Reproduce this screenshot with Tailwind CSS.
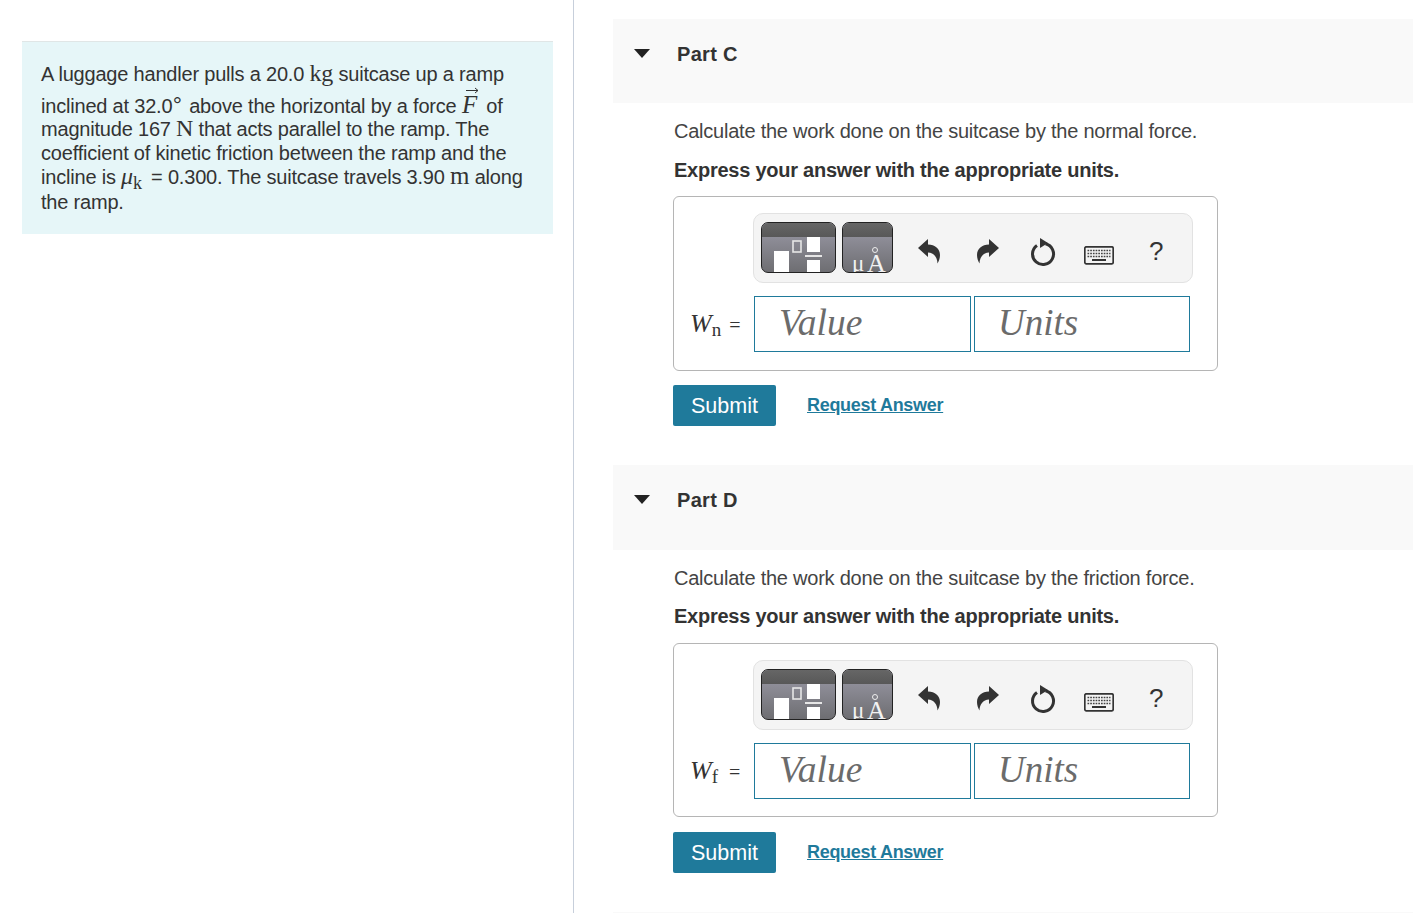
<!DOCTYPE html>
<html lang="en">
<head>
    <meta charset="UTF-8">
    <title>Part C and Part D</title>
    <script src="https://cdn.jsdelivr.net/npm/@tailwindcss/browser@4"></script>
</head>
<body class="bg-white font-['Liberation_Sans',Arial,sans-serif] text-[#333]">
<div class="flex h-[913px] w-[1413px] overflow-hidden">

    <!-- problem statement -->
    <div class="w-[574px] h-full shrink-0 border-r border-[#c7cfdb] pt-[41px] pl-[22px]">
        <div class="w-[531px] h-[193px] bg-[#e6f6f8] border-t border-[#e0e6e6] pl-[19px] pt-[18px] text-[20px] tracking-[-0.2px] text-[#333]">
            <div class="h-[32px] leading-[28px] whitespace-nowrap">A luggage handler pulls a 20.0 <span class="font-['Liberation_Serif',serif] text-[24px] leading-none">kg</span> suitcase up a ramp</div>
            <div class="h-[24px] leading-[24px] whitespace-nowrap">inclined at 32.0<span class="ml-[0.5px] mr-[2px] text-[23px] leading-none">°</span> above the horizontal by a force <span class="relative mr-[4px] font-['Liberation_Serif',serif] italic text-[25px] leading-none">F<svg class="absolute left-[4px] -top-[4px]" width="13" height="7" viewBox="0 0 13 7" fill="none" stroke="#333"><path d="M0 3.500 H12 M9 1 L12 3.500 L9 6"/></svg></span> of</div>
            <div class="h-[25px] leading-[22px] whitespace-nowrap">magnitude 167 <span class="font-['Liberation_Serif',serif] text-[24px] leading-none">N</span> that acts parallel to the ramp. The</div>
            <div class="h-[22px] leading-[24px] whitespace-nowrap">coefficient of kinetic friction between the ramp and the</div>
            <div class="h-[27px] leading-[21px] whitespace-nowrap">incline is <span class="font-['Liberation_Serif',serif] italic text-[24px] leading-none">μ</span><sub class="font-['Liberation_Serif',serif] text-[18px]">k</sub> <span class="ml-[4px]">= 0.300. The suitcase travels 3.90 </span><span class="font-['Liberation_Serif',serif] text-[25px] leading-none">m</span> along</div>
            <div class="h-[24px] leading-[24px] whitespace-nowrap">the ramp.</div>
        </div>
    </div>

    <!-- parts -->
    <div class="flex-1 pt-[19px] pl-[39px]">

        <!-- Part C -->
        <section class="h-[446px]">
            <div class="h-[84px] bg-[#f9f9f9] flex items-start pt-[22px] pl-[21px]">
                <span class="mt-[8px] w-0 h-0 border-l-[8px] border-r-[8px] border-t-[9px] border-l-transparent border-r-transparent border-t-[#222]"></span>
                <h2 class="ml-[27px] text-[20px] leading-[26px] font-bold tracking-[0.3px] text-[#333]">Part C</h2>
            </div>
            <div class="ml-[60px] w-[545px]">
                <p class="mt-[15px] pl-[1px] text-[20px] leading-[26px] tracking-[-0.23px] text-[#444]">Calculate the work done on the suitcase by the normal force.</p>
                <p class="mt-[13px] pl-[1px] text-[20px] leading-[26px] tracking-[-0.25px] font-bold text-[#333]">Express your answer with the appropriate units.</p>
                <div class="mt-[13px] h-[175px] border border-[#b5b5b5] rounded-[6px] pt-[16px] pl-[79px]">
                    <div class="w-[440px] h-[70px] bg-[#f4f4f4] border border-[#e2e2e2] rounded-[10px] flex items-start pt-[8px] pl-[7px]">
                        <div class="relative w-[75px] h-[51px] rounded-[7px] border border-[#222] overflow-hidden bg-gradient-to-b from-[#9c9ba8] to-[#6e6e72]">
                            <div class="h-[14px] bg-gradient-to-b from-[#666] to-[#585858]"></div>
                            <svg class="absolute left-0 top-0" width="73" height="49" viewBox="0 0 73 49" fill="#fff"><rect x="12" y="28" width="15" height="22"/><rect x="31" y="18" width="8" height="11" fill="none" stroke="#e6e6e6" stroke-width="1.6"/><rect x="45" y="14" width="13" height="15"/><rect x="43" y="32" width="17" height="2" fill="#e6e6e6"/><rect x="45" y="37" width="13" height="13"/></svg>
                        </div>
                        <div class="relative ml-[6px] w-[51px] h-[51px] rounded-[7px] border border-[#222] overflow-hidden bg-gradient-to-b from-[#9c9ba8] to-[#6e6e72]">
                            <div class="h-[14px] bg-gradient-to-b from-[#666] to-[#585858]"></div>
                            <span class="absolute left-[9px] bottom-[-3px] font-['Liberation_Serif',serif] text-[23px] leading-[23px] text-[#f2f2f2]">μ</span>
                            <span class="absolute left-[24px] bottom-[-5px] font-['Liberation_Serif',serif] text-[26px] leading-[26px] text-[#f2f2f2]">A</span>
                            <span class="absolute left-[29px] top-[24px] w-[6px] h-[6px] rounded-full border border-[#eee]"></span>
                        </div>
                        <svg class="ml-[24px] mt-[16px]" width="24" height="26" viewBox="0 0 24 26" fill="#333"><path d="M1 10 L11 1 V6.500 C18 6.500 23 11 23 17 C23 20 22 23 20.500 25.500 C20.500 20 17 14.500 11 14.500 V19 Z"/></svg>
                        <svg class="ml-[35px] mt-[16px]" width="24" height="26" viewBox="0 0 24 26" fill="#333"><path d="M23 10 L13 1 V6.500 C6 6.500 1 11 1 17 C1 20 2 23 3.500 25.500 C3.500 20 7 14.500 13 14.500 V19 Z"/></svg>
                        <svg class="ml-[30px] mt-[15px]" width="28" height="30" viewBox="0 0 28 30" fill="none"><path d="M15.500 6.800 A10.500 10.500 0 1 1 7 8.400" stroke="#333" stroke-width="3"/><path d="M10 1 L18 6 L10 11 Z" fill="#333"/></svg>
                        <svg class="ml-[26px] mt-[24px]" width="30" height="19" viewBox="0 0 30 19" fill="none"><rect x="0.800" y="0.800" width="28.400" height="17" rx="1.500" stroke="#333" stroke-width="1.700"/><path d="M3.500 4.500 H26.500 M3.500 7.500 H26.500 M3.500 10.500 H26.500" stroke="#444" stroke-width="1.700" stroke-dasharray="1.700 1"/><path d="M8 14 H22" stroke="#333" stroke-width="2"/></svg>
                        <span class="ml-[35px] mt-[11px] text-[26px] leading-[36px] text-[#333]">?</span>
                    </div>
                    <div class="flex items-center mt-[13px] -ml-[63px]">
                        <span class="w-[64px] pb-[2px] font-['Liberation_Serif',serif] text-[26px] whitespace-nowrap"><i>W</i><sub class="text-[19px]">n</sub><span class="ml-[8px] text-[20px]">=</span></span>
                        <div class="w-[217px] h-[56px] border border-[#1f7a9b] pl-[24px] font-['Liberation_Serif',serif] italic text-[37.500px] leading-[51px] text-[#6b6b6b]">Value</div>
                        <div class="ml-[3px] w-[216px] h-[56px] border border-[#1f7a9b] pl-[23px] font-['Liberation_Serif',serif] italic text-[37px] leading-[51px] text-[#6b6b6b]">Units</div>
                    </div>
                </div>
                <div class="flex items-center mt-[14px]">
                    <button class="w-[103px] h-[41px] pt-[1px] bg-[#1f7a9b] rounded-[2px] text-white text-[21.500px]">Submit</button>
                    <a href="#" class="ml-[31px] text-[18px] font-bold tracking-[-0.3px] text-[#1f7a9b] underline">Request Answer</a>
                </div>
            </div>
        </section>

        <!-- Part D -->
        <section class="h-[447px]">
            <div class="h-[85px] bg-[#f9f9f9] flex items-start pt-[22px] pl-[21px]">
                <span class="mt-[8px] w-0 h-0 border-l-[8px] border-r-[8px] border-t-[9px] border-l-transparent border-r-transparent border-t-[#222]"></span>
                <h2 class="ml-[27px] text-[20px] leading-[26px] font-bold tracking-[0.3px] text-[#333]">Part D</h2>
            </div>
            <div class="ml-[60px] w-[545px]">
                <p class="mt-[15px] pl-[1px] text-[20px] leading-[26px] tracking-[-0.23px] text-[#444]">Calculate the work done on the suitcase by the friction force.</p>
                <p class="mt-[12px] pl-[1px] text-[20px] leading-[26px] tracking-[-0.25px] font-bold text-[#333]">Express your answer with the appropriate units.</p>
                <div class="mt-[14px] h-[174px] border border-[#b5b5b5] rounded-[6px] pt-[16px] pl-[79px]">
                    <div class="w-[440px] h-[70px] bg-[#f4f4f4] border border-[#e2e2e2] rounded-[10px] flex items-start pt-[8px] pl-[7px]">
                        <div class="relative w-[75px] h-[51px] rounded-[7px] border border-[#222] overflow-hidden bg-gradient-to-b from-[#9c9ba8] to-[#6e6e72]">
                            <div class="h-[14px] bg-gradient-to-b from-[#666] to-[#585858]"></div>
                            <svg class="absolute left-0 top-0" width="73" height="49" viewBox="0 0 73 49" fill="#fff"><rect x="12" y="28" width="15" height="22"/><rect x="31" y="18" width="8" height="11" fill="none" stroke="#e6e6e6" stroke-width="1.6"/><rect x="45" y="14" width="13" height="15"/><rect x="43" y="32" width="17" height="2" fill="#e6e6e6"/><rect x="45" y="37" width="13" height="13"/></svg>
                        </div>
                        <div class="relative ml-[6px] w-[51px] h-[51px] rounded-[7px] border border-[#222] overflow-hidden bg-gradient-to-b from-[#9c9ba8] to-[#6e6e72]">
                            <div class="h-[14px] bg-gradient-to-b from-[#666] to-[#585858]"></div>
                            <span class="absolute left-[9px] bottom-[-3px] font-['Liberation_Serif',serif] text-[23px] leading-[23px] text-[#f2f2f2]">μ</span>
                            <span class="absolute left-[24px] bottom-[-5px] font-['Liberation_Serif',serif] text-[26px] leading-[26px] text-[#f2f2f2]">A</span>
                            <span class="absolute left-[29px] top-[24px] w-[6px] h-[6px] rounded-full border border-[#eee]"></span>
                        </div>
                        <svg class="ml-[24px] mt-[16px]" width="24" height="26" viewBox="0 0 24 26" fill="#333"><path d="M1 10 L11 1 V6.500 C18 6.500 23 11 23 17 C23 20 22 23 20.500 25.500 C20.500 20 17 14.500 11 14.500 V19 Z"/></svg>
                        <svg class="ml-[35px] mt-[16px]" width="24" height="26" viewBox="0 0 24 26" fill="#333"><path d="M23 10 L13 1 V6.500 C6 6.500 1 11 1 17 C1 20 2 23 3.500 25.500 C3.500 20 7 14.500 13 14.500 V19 Z"/></svg>
                        <svg class="ml-[30px] mt-[15px]" width="28" height="30" viewBox="0 0 28 30" fill="none"><path d="M15.500 6.800 A10.500 10.500 0 1 1 7 8.400" stroke="#333" stroke-width="3"/><path d="M10 1 L18 6 L10 11 Z" fill="#333"/></svg>
                        <svg class="ml-[26px] mt-[24px]" width="30" height="19" viewBox="0 0 30 19" fill="none"><rect x="0.800" y="0.800" width="28.400" height="17" rx="1.500" stroke="#333" stroke-width="1.700"/><path d="M3.500 4.500 H26.500 M3.500 7.500 H26.500 M3.500 10.500 H26.500" stroke="#444" stroke-width="1.700" stroke-dasharray="1.700 1"/><path d="M8 14 H22" stroke="#333" stroke-width="2"/></svg>
                        <span class="ml-[35px] mt-[11px] text-[26px] leading-[36px] text-[#333]">?</span>
                    </div>
                    <div class="flex items-center mt-[13px] -ml-[63px]">
                        <span class="w-[64px] pb-[2px] font-['Liberation_Serif',serif] text-[26px] whitespace-nowrap"><i>W</i><sub class="text-[19px]">f</sub><span class="ml-[11px] text-[20px]">=</span></span>
                        <div class="w-[217px] h-[56px] border border-[#1f7a9b] pl-[24px] font-['Liberation_Serif',serif] italic text-[37.500px] leading-[51px] text-[#6b6b6b]">Value</div>
                        <div class="ml-[3px] w-[216px] h-[56px] border border-[#1f7a9b] pl-[23px] font-['Liberation_Serif',serif] italic text-[37px] leading-[51px] text-[#6b6b6b]">Units</div>
                    </div>
                </div>
                <div class="flex items-center mt-[15px]">
                    <button class="w-[103px] h-[41px] pt-[1px] bg-[#1f7a9b] rounded-[2px] text-white text-[21.500px]">Submit</button>
                    <a href="#" class="ml-[31px] text-[18px] font-bold tracking-[-0.3px] text-[#1f7a9b] underline">Request Answer</a>
                </div>
            </div>
        </section>

        <!-- next part header, cut off by the window -->
        <div class="h-[20px] bg-[#f9f9f9]"></div>
    </div>
</div>
</body>
</html>
